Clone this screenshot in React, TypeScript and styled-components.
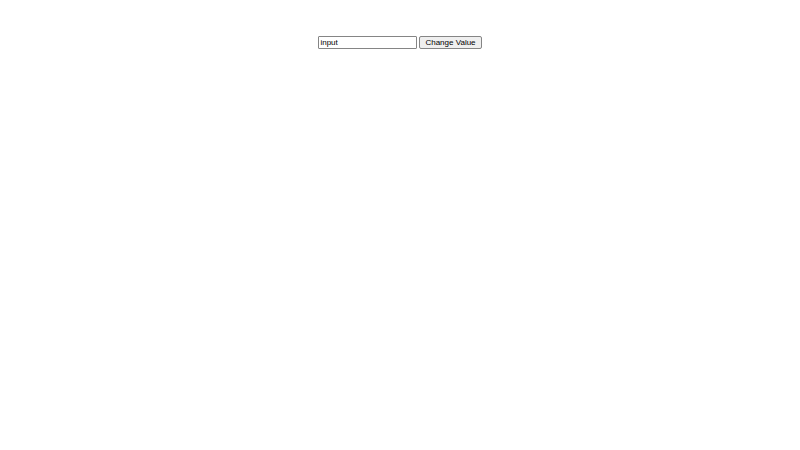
import React, { FC, useState } from "react";
import styled, { createGlobalStyle } from "styled-components";

const GlobalStyle = createGlobalStyle`
  body {
    margin: 0;
    background-color: #fff;
  }
`;

const Container = styled.div`
  display: flex;
  justify-content: center;
  align-items: center;
  gap: 2px;
  padding: 36px 16px;
  font-family: "Liberation Sans", Arial, sans-serif;
`;

const Input = styled.input`
  box-sizing: border-box;
  width: 99px;
  height: 13px;
  padding: 0 1px;
  border: 1px solid #858585;
  border-radius: 1px;
  background-color: #fff;
  color: #000;
  font-family: inherit;
  font-size: 8px;
  line-height: 11px;
`;

const Button = styled.button`
  box-sizing: border-box;
  height: 13px;
  padding: 0 5px;
  border: 1px solid #858585;
  border-radius: 2px;
  background-color: #efefef;
  color: #000;
  font-family: inherit;
  font-size: 8px;
  line-height: 11px;
  white-space: nowrap;
  cursor: pointer;
`;

const App: FC = () => {
  const [value, setValue] = useState("input");

  return (
    <>
      <GlobalStyle />
      <Container>
        <Input
          type="text"
          aria-label="Value"
          value={value}
          onChange={(e) => setValue(e.target.value)}
        />
        <Button type="button" onClick={() => setValue("changed")}>
          Change Value
        </Button>
      </Container>
    </>
  );
};

export default App;
